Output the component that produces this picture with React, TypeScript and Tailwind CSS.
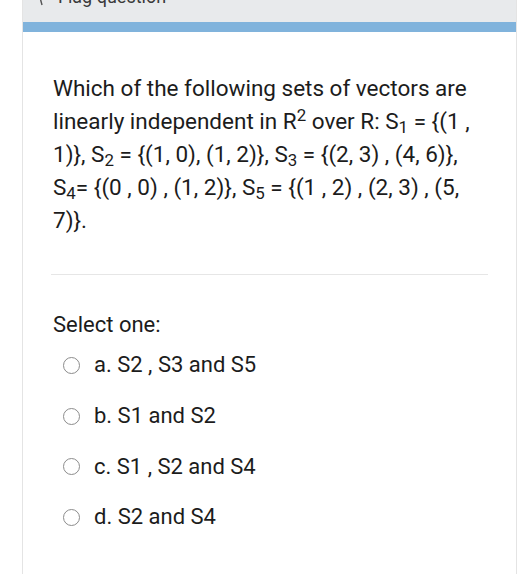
import React from "react";

const options = ["a. S2 , S3 and S5", "b. S1 and S2", "c. S1 , S2 and S4", "d. S2 and S4"];

export default function App() {
  return (
    <div
      className="w-[532px] h-[574px] bg-white overflow-hidden"
      style={{ fontFamily: "Roboto, 'Noto Sans', sans-serif" }}
    >
      <div className="ml-[22px] w-[495px] h-[574px] border-x border-[#e4e4e4] flex flex-col">
        <div className="h-[22px] bg-[#e8eaec] overflow-hidden shrink-0">
          <div className="-mt-[12px] flex items-center text-[18px] leading-[18px] text-[#3a3a3a]">
            <svg width="10" height="18" viewBox="0 0 10 18" className="ml-[13px] mr-[12px]">
              <path d="M2 2 L6 17" stroke="#555" strokeWidth="1.4" fill="none" />
            </svg>
            <span>Flag question</span>
          </div>
        </div>
        <div className="h-[10px] bg-[#80b3dc] shrink-0" />
        <div className="px-[28px] pt-[40px] flex flex-col">
          <div className="pl-[2px] text-[22.5px] leading-[33px] text-[#1c1c1c] whitespace-nowrap">
            Which of the following sets of vectors are
            <br />
            linearly independent in R<sup>2</sup> over R: S<sub>1</sub> = {"{"}(1 ,
            <br />
            1){"}"}, S<sub>2</sub> = {"{"}(1, 0), (1, 2){"}"}, S<sub>3</sub> = {"{"}(2, 3) , (4, 6){"}"},
            <br />
            S<sub>4</sub>= {"{"}(0 , 0) , (1, 2){"}"}, S<sub>5</sub> = {"{"}(1 , 2) , (2, 3) , (5,
            <br />
            7){"}"}.
          </div>
          <div className="mt-[37px] h-px bg-[#e6e6e6]" />
          <div className="mt-[36px] pl-[2px] text-[22px] leading-[28px] text-[#1c1c1c]">Select one:</div>
          <div className="mt-[1px] flex flex-col">
            {options.map((o) => (
              <div key={o} className="h-[50.7px] flex items-center">
                <span className="ml-[12px] w-[17px] h-[17px] rounded-full border-[1.5px] border-[#8c8c8c] shrink-0" />
                <span className="ml-[14px] text-[22px] leading-[28px] text-[#1c1c1c]">{o}</span>
              </div>
            ))}
          </div>
        </div>
      </div>
    </div>
  );
}
